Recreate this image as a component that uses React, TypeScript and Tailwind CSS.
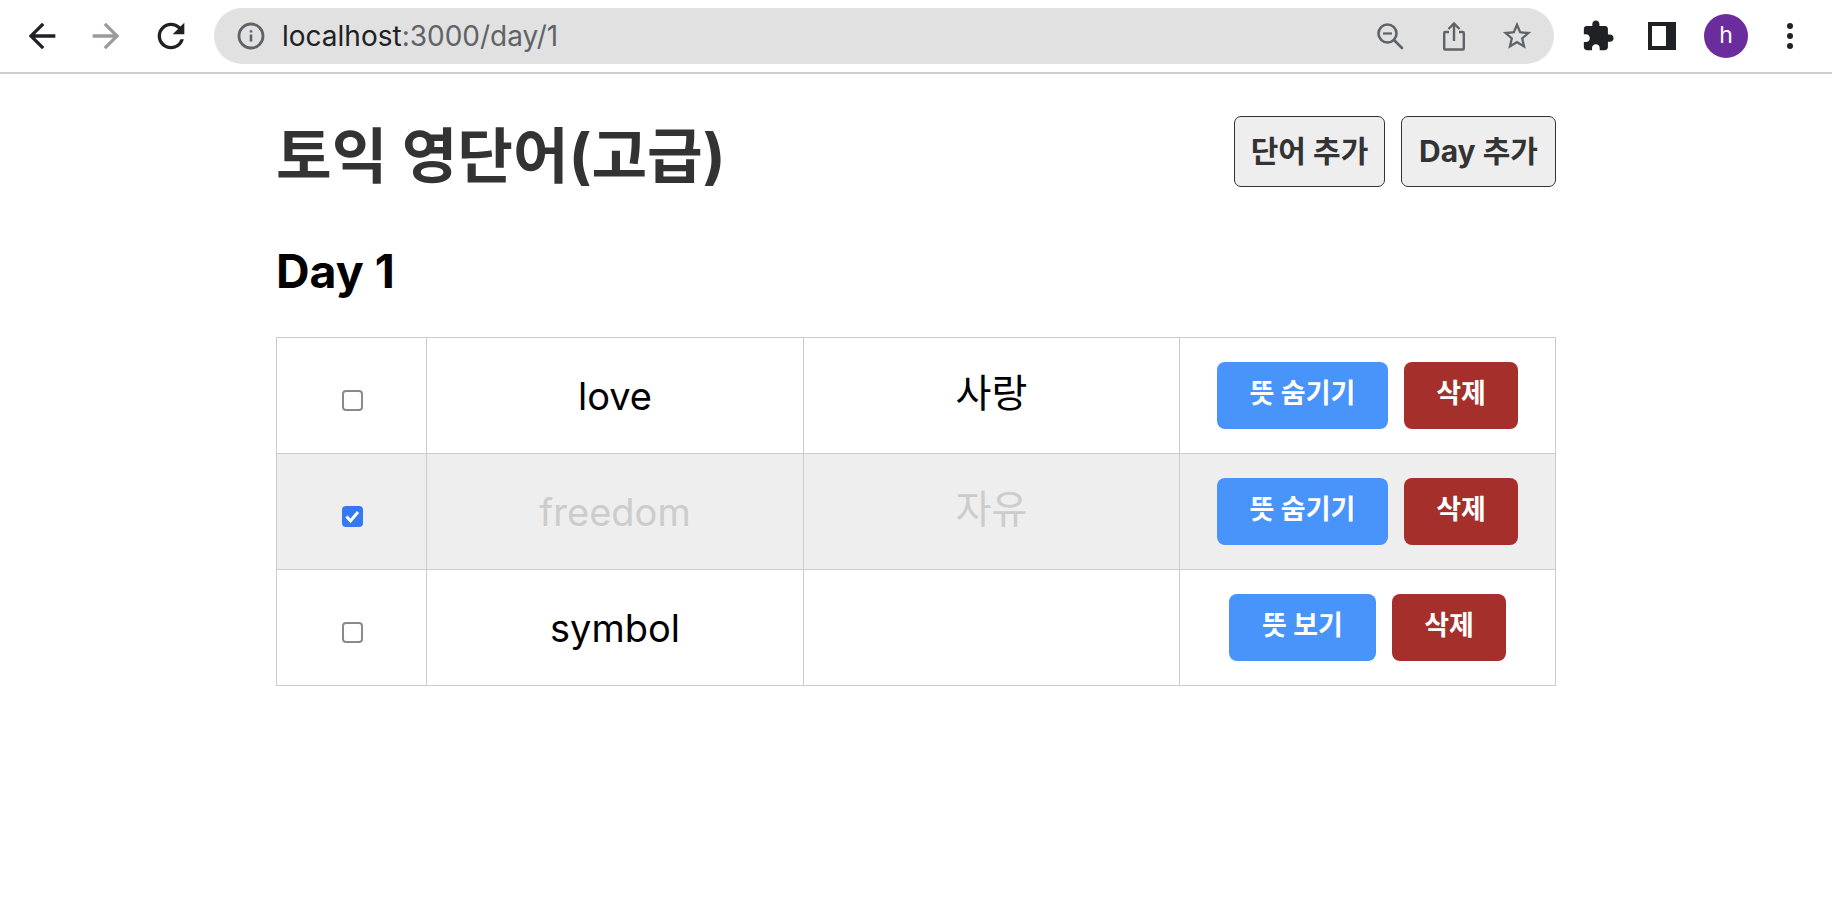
const words = [
  { eng: "love", kor: "사랑", checked: false, show: true },
  { eng: "freedom", kor: "자유", checked: true, show: true },
  { eng: "symbol", kor: "", checked: false, show: false },
];

const Toolbar = () => (
  <div className="flex h-[74px] items-center border-b-2 border-[#cfcfcf] bg-white pb-[1px]">
    <svg className="ml-[22px] h-[40px] w-[40px] text-[#202124]" viewBox="0 0 24 24" fill="currentColor">
      <path d="M20 11H7.83l5.59-5.59L12 4l-8 8 8 8 1.41-1.41L7.83 13H20v-2z" />
    </svg>
    <svg className="ml-[24px] h-[40px] w-[40px] text-[#9b9b9b]" viewBox="0 0 24 24" fill="currentColor">
      <path d="M12 4l-1.41 1.41L16.17 11H4v2h12.17l-5.58 5.59L12 20l8-8z" />
    </svg>
    <svg className="ml-[25px] h-[40px] w-[40px] text-[#202124]" viewBox="0 0 24 24" fill="currentColor">
      <path d="M17.65 6.35A7.958 7.958 0 0 0 12 4c-4.42 0-7.99 3.58-7.99 8s3.57 8 7.99 8c3.73 0 6.84-2.55 7.73-6h-2.08A5.99 5.99 0 0 1 12 18c-3.31 0-6-2.69-6-6s2.69-6 6-6c1.66 0 3.14.69 4.22 1.78L13 11h7V4l-2.35 2.35z" />
    </svg>
    <div className="ml-[23px] flex h-[56px] w-[1340px] items-center rounded-full bg-[#e1e1e1]">
      <svg className="ml-[23px] h-[28px] w-[28px] text-[#5f6368]" viewBox="0 0 28 28" fill="none" stroke="currentColor">
        <circle cx="14" cy="14" r="12" strokeWidth="2.8" />
        <path d="M14 12.5v7M14 8.2v2.4" strokeWidth="2.6" />
      </svg>
      <div className="ml-[17px] font-['Inter',sans-serif] text-[28px] leading-none text-[#5f6368]">
        <span className="text-[#202124]">localhost</span>:3000/day/1
      </div>
      <svg className="ml-auto h-[28px] w-[28px] text-[#5f6368]" viewBox="0 0 28 28" fill="none" stroke="currentColor" strokeWidth="2.6">
        <circle cx="11.5" cy="11.5" r="9" />
        <path d="M18 18l8 8" strokeLinecap="round" />
        <path d="M7 11.5h9" strokeWidth="2.2" />
      </svg>
      <svg className="ml-[39px] h-[30px] w-[22px] text-[#5f6368]" viewBox="0 0 22 30" fill="none" stroke="currentColor" strokeWidth="2.4">
        <path d="M6 11H2.2a1 1 0 0 0-1 1v15.5a1 1 0 0 0 1 1h17.6a1 1 0 0 0 1-1V12a1 1 0 0 0-1-1H16" />
        <path d="M11 20V2.5M5.5 8L11 2.5 16.500 8" />
      </svg>
      <svg className="ml-[35px] mr-[20px] h-[34px] w-[34px] text-[#5f6368]" viewBox="0 0 24 24" fill="currentColor">
        <path d="M22 9.24l-7.19-.62L12 2 9.19 8.63 2 9.24l5.46 4.73L5.82 21 12 17.27 18.18 21l-1.63-7.03L22 9.24zM12 15.4l-3.76 2.27 1-4.28-3.32-2.88 4.38-.38L12 6.1l1.71 4.04 4.38.38-3.32 2.88 1 4.28L12 15.4z" />
      </svg>
    </div>
    <svg className="ml-[27px] h-[34px] w-[34px] text-[#202124]" viewBox="0 0 24 24" fill="currentColor">
      <path d="M20.5 11H19V7c0-1.100-.9-2-2-2h-4V3.500C13 2.120 11.880 1 10.500 1S8 2.120 8 3.500V5H4c-1.100 0-1.990.9-1.990 2v3.800H3.500c1.490 0 2.700 1.210 2.700 2.700s-1.210 2.700-2.700 2.700H2V20c0 1.100.9 2 2 2h3.800v-1.500c0-1.490 1.210-2.700 2.700-2.700 1.490 0 2.700 1.210 2.700 2.700V22H17c1.100 0 2-.9 2-2v-4h1.500c1.380 0 2.500-1.120 2.500-2.500S21.880 11 20.500 11z" />
    </svg>
    <div className="ml-[33px] flex h-[28px] w-[28px] bg-[#202124] py-[4px] pl-[4px] pr-[10px]">
      <div className="h-full w-full bg-white" />
    </div>
    <div className="ml-[28px] flex h-[44px] w-[44px] items-center justify-center rounded-full bg-[#6b2c9e] font-['Inter',sans-serif] text-[23px] text-white">
      h
    </div>
    <div className="ml-[39px] flex flex-col gap-[4px]">
      <div className="h-[6px] w-[6px] rounded-full bg-[#202124]" />
      <div className="h-[6px] w-[6px] rounded-full bg-[#202124]" />
      <div className="h-[6px] w-[6px] rounded-full bg-[#202124]" />
    </div>
  </div>
);

const Button = ({ label, className }: { label: string; className: string }) => (
  <button className={"h-[67px] rounded-[8px] pb-[3px] text-[27px] font-bold text-white " + className}>{label}</button>
);

const Check = ({ checked }: { checked: boolean }) => (
  <span className="relative inline-block h-[21px] w-[21px] align-middle">
    <input
      type="checkbox"
      defaultChecked={checked}
      className="peer block h-full w-full appearance-none rounded-[4px] border-2 border-[#8a8a8a] bg-white checked:border-0 checked:bg-[#3478f6]"
    />
    <svg className="pointer-events-none absolute inset-0 hidden h-full w-full peer-checked:block" viewBox="0 0 21 21" fill="none" stroke="white" strokeWidth="3">
      <path d="M4.500 10.500l4 4.500 7.500-9" />
    </svg>
  </span>
);

export default function App() {
  return (
    <div className="min-h-[900px] bg-white font-['Inter','Noto_Sans_CJK_KR',sans-serif]">
      <Toolbar />
      <div className="mx-auto w-[1280px]">
        <div className="flex items-start justify-between pt-[42px]">
          <h1 className="mt-[5px] text-[60.5px] font-bold leading-[71px] text-[#333]">토익 영단어(고급)</h1>
          <div className="flex gap-[16px]">
            <button className="h-[71px] w-[151px] rounded-[7px] border border-[#333] bg-[#eee] text-[30px] font-bold text-[#333]">
              단어 추가
            </button>
            <button className="h-[71px] w-[155px] rounded-[7px] border border-[#333] bg-[#eee] text-[30px] font-bold text-[#333]">
              Day 추가
            </button>
          </div>
        </div>
        <h2 className="mt-[49px] text-[46.5px] font-bold leading-[60px] text-black">Day 1</h2>
        <table className="mt-[36px] w-full table-fixed border-collapse border border-[#ccc] text-center text-[38px] text-black">
          <colgroup>
            <col className="w-[150px]" />
            <col className="w-[377px]" />
            <col className="w-[376px]" />
            <col />
          </colgroup>
          <tbody>
            {words.map((w) => (
              <tr key={w.eng} className={"h-[116px] " + (w.checked ? "bg-[#eee] text-[#ccc]" : "")}>
                <td className="border border-[#ccc] pl-[2px] pt-[3px]">
                  <Check checked={w.checked} />
                </td>
                <td className="border border-[#ccc] pt-[2px]">{w.eng}</td>
                <td className="border border-[#ccc] pb-[4px] text-[39px]">{w.show ? w.kor : ""}</td>
                <td className="border border-[#ccc]">
                  <div className="flex justify-center gap-[16px]">
                    <Button label={w.show ? "뜻 숨기기" : "뜻 보기"} className={"bg-[#4894fa] " + (w.show ? "w-[171px]" : "w-[147px]")} />
                    <Button label="삭제" className="w-[114px] bg-[#a52f2b]" />
                  </div>
                </td>
              </tr>
            ))}
          </tbody>
        </table>
      </div>
    </div>
  );
}
